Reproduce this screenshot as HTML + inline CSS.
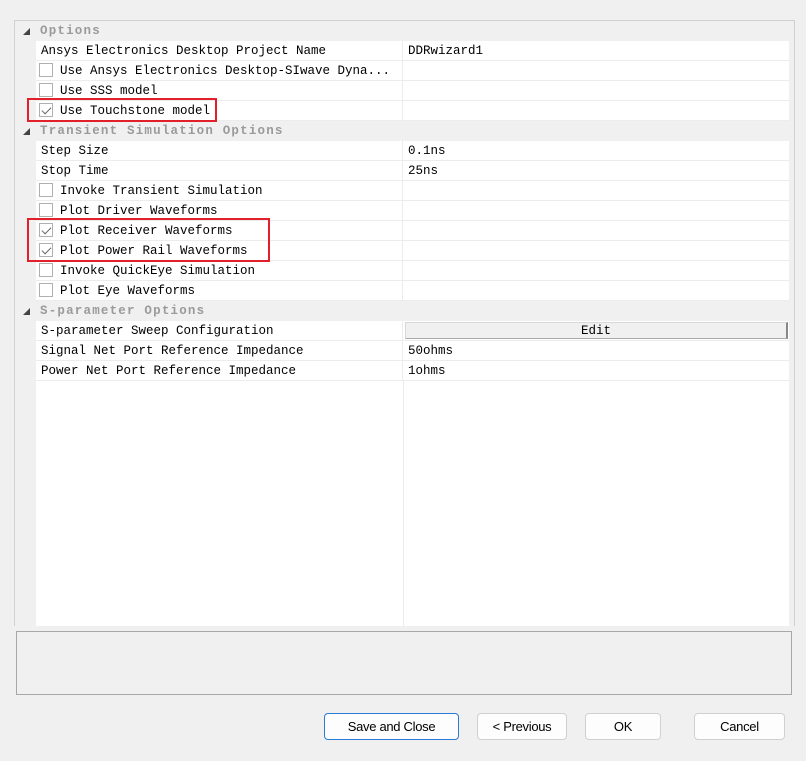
<!DOCTYPE html>
<html><head><meta charset="utf-8"><style>
*{margin:0;padding:0;box-sizing:border-box}
body{width:806px;height:761px;background:#f0f0f0;position:relative;overflow:hidden;font-family:"Liberation Mono","Noto Sans CJK SC",monospace;font-size:12.5px;color:#000}
.grid{position:absolute;left:14px;top:20px;width:781px;height:606px;border:1px solid #d0d0d0;border-bottom:none;background:#fff}
.row{position:absolute;left:0;width:776px;height:20px;line-height:21px}
.cat{background:#f0f0f0;color:#9a9a9a;font-weight:bold;letter-spacing:1.2px}
.cat .tri{position:absolute;left:8px;top:7px;width:0;height:0;border-left:7px solid transparent;border-bottom:7px solid #444}
.cat span{position:absolute;left:25px}
.prop .m{position:absolute;left:0;top:0;width:21px;height:20px;background:#f0f0f0}
.prop .n{position:absolute;left:21px;top:0;width:367px;height:20px;border-bottom:1px solid #ececec;border-right:1px solid #ececec;padding-left:5px;white-space:nowrap}
.prop .v{position:absolute;left:388px;top:0;width:388px;height:20px;border-bottom:1px solid #ececec;padding-left:5px}
.cb{display:inline-block;width:14px;height:14px;border:1px solid #b0b0b0;background:#fff;vertical-align:-3px;margin-right:7px;position:relative;margin-left:-2px}
.cb.c::after{content:"";position:absolute;left:4px;top:1px;width:4px;height:8px;border:solid #666;border-width:0 1.5px 1.5px 0;transform:rotate(45deg)}
.vline{position:absolute;left:388px;top:360px;width:1px;height:246px;background:#ececec}
.sb{position:absolute;right:0;top:0;width:5px;height:606px;background:#f0f0f0}
.red{position:absolute;border:2px solid #e0202a}
.desc{position:absolute;left:16px;top:631px;width:776px;height:64px;border:1px solid #a8a8a8;background:#f0f0f0}
.btn{position:absolute;top:713px;height:27px;border:1px solid #d0d0d0;border-radius:4px;background:#fdfdfd;font-family:"Liberation Sans",sans-serif;font-size:13px;text-align:center;line-height:25px;letter-spacing:-0.3px}
.edit{position:absolute;left:2px;top:1px;width:383px;height:17px;background:#f0f0f0;border:1px solid #d8d8d8;border-right:2px solid #888;border-bottom:1px solid #aaa;text-align:center;line-height:16px}
</style></head><body>
<div class="grid">
<div class="row cat" style="top:0"><div class="tri"></div><span>Options</span></div>
<div class="row prop" style="top:20px"><div class="m"></div><div class="n">Ansys Electronics Desktop Project Name</div><div class="v">DDRwizard1</div></div>
<div class="row prop" style="top:40px"><div class="m"></div><div class="n"><i class="cb"></i>Use Ansys Electronics Desktop-SIwave Dyna...</div><div class="v"></div></div>
<div class="row prop" style="top:60px"><div class="m"></div><div class="n"><i class="cb"></i>Use SSS model</div><div class="v"></div></div>
<div class="row prop" style="top:80px"><div class="m"></div><div class="n"><i class="cb c"></i>Use Touchstone model</div><div class="v"></div></div>
<div class="row cat" style="top:100px"><div class="tri"></div><span>Transient Simulation Options</span></div>
<div class="row prop" style="top:120px"><div class="m"></div><div class="n">Step Size</div><div class="v">0.1ns</div></div>
<div class="row prop" style="top:140px"><div class="m"></div><div class="n">Stop Time</div><div class="v">25ns</div></div>
<div class="row prop" style="top:160px"><div class="m"></div><div class="n"><i class="cb"></i>Invoke Transient Simulation</div><div class="v"></div></div>
<div class="row prop" style="top:180px"><div class="m"></div><div class="n"><i class="cb"></i>Plot Driver Waveforms</div><div class="v"></div></div>
<div class="row prop" style="top:200px"><div class="m"></div><div class="n"><i class="cb c"></i>Plot Receiver Waveforms</div><div class="v"></div></div>
<div class="row prop" style="top:220px"><div class="m"></div><div class="n"><i class="cb c"></i>Plot Power Rail Waveforms</div><div class="v"></div></div>
<div class="row prop" style="top:240px"><div class="m"></div><div class="n"><i class="cb"></i>Invoke QuickEye Simulation</div><div class="v"></div></div>
<div class="row prop" style="top:260px"><div class="m"></div><div class="n"><i class="cb"></i>Plot Eye Waveforms</div><div class="v"></div></div>
<div class="row cat" style="top:280px"><div class="tri"></div><span>S-parameter Options</span></div>
<div class="row prop" style="top:300px"><div class="m"></div><div class="n">S-parameter Sweep Configuration</div><div class="v"><div class="edit">Edit</div></div></div>
<div class="row prop" style="top:320px"><div class="m"></div><div class="n">Signal Net Port Reference Impedance</div><div class="v">50ohms</div></div>
<div class="row prop" style="top:340px"><div class="m"></div><div class="n">Power Net Port Reference Impedance</div><div class="v">1ohms</div></div>
<div class="m" style="position:absolute;left:0;top:360px;width:21px;height:246px;background:#f0f0f0"></div>
<div class="vline"></div>
<div class="sb"></div>
</div>
<div class="red" style="left:27px;top:98px;width:190px;height:24px"></div>
<div class="red" style="left:27px;top:218px;width:243px;height:44px"></div>
<div class="desc"></div>
<div class="btn" style="left:324px;width:135px;border-color:#2a7bd6">Save and Close</div>
<div class="btn" style="left:477px;width:90px">&lt; Previous</div>
<div class="btn" style="left:585px;width:76px">OK</div>
<div class="btn" style="left:694px;width:91px">Cancel</div>
</body></html>
